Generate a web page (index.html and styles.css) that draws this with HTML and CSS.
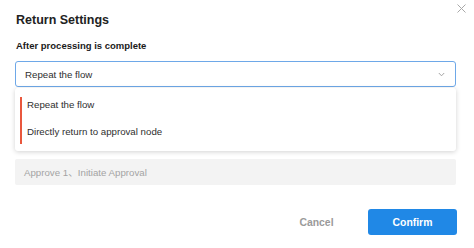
FILE: index.html
```html
<!DOCTYPE html>
<html>
<head>
<meta charset="utf-8">
<link rel="stylesheet" href="styles.css">
</head>
<body>
<div class="dialog">
  <button class="close" aria-label="Close">
    <svg width="9" height="9" viewBox="0 0 9 9"><path d="M0.5 0.5L8.5 8.5M8.5 0.5L0.5 8.5" stroke="#a8a8a8" stroke-width="1" fill="none"/></svg>
  </button>
  <h1 class="title">Return Settings</h1>
  <div class="label">After processing is complete</div>
  <div class="select">
    <span class="select-value">Repeat the flow</span>
    <svg class="chevron" width="7" height="5" viewBox="0 0 7 5"><path d="M0.8 1L3.5 3.8L6.2 1" stroke="#9a9a9a" stroke-width="0.9" fill="none"/></svg>
  </div>
  <div class="menu">
    <div class="options">
      <div class="option">Repeat the flow</div>
      <div class="option">Directly return to approval node</div>
    </div>
  </div>
  <div class="disabled-field">Approve 1、Initiate Approval</div>
  <div class="footer">
    <button class="btn btn-cancel">Cancel</button>
    <button class="btn btn-confirm">Confirm</button>
  </div>
</div>
</body>
</html>
```

FILE: styles.css
```css
html, body {
  margin: 0;
  padding: 0;
  background: #ffffff;
}
body {
  font-family: "Liberation Sans", Arial, "Noto Sans CJK SC", sans-serif;
  width: 474px;
  height: 248px;
  overflow: hidden;
}
.dialog {
  position: relative;
  padding: 13px 18px 0 15px;
  display: flex;
  flex-direction: column;
}
.close {
  position: absolute;
  top: 4px;
  right: 8px;
  width: 9px;
  height: 9px;
  padding: 0;
  border: 0;
  background: none;
  display: flex;
}
.title {
  margin: 0;
  font-size: 12.5px;
  line-height: 15px;
  font-weight: bold;
  color: #222222;
  padding-left: 1px;
}
.label {
  margin-top: 12px;
  font-size: 9.5px;
  line-height: 12px;
  font-weight: bold;
  color: #1a1a1a;
  padding-left: 1px;
}
.select {
  margin-top: 9px;
  height: 26px;
  box-sizing: border-box;
  border: 1px solid #6ea8e8;
  border-radius: 3px;
  display: flex;
  align-items: center;
  justify-content: space-between;
  padding: 0 10px 0 9px;
  font-size: 9.7px;
  color: #2e2e2e;
}
.chevron {
  display: block;
}
.menu {
  margin-top: 1px;
  height: 63px;
  box-sizing: border-box;
  padding-top: 3px;
  background: #ffffff;
  border-radius: 3px;
  box-shadow: 0 1px 5px rgba(0, 0, 0, 0.18);
}
.options {
  position: relative;
}
.options::before {
  content: "";
  position: absolute;
  left: 5px;
  top: 6px;
  bottom: 1px;
  width: 1.6px;
  background: #e9573d;
}
.option {
  height: 27px;
  display: flex;
  align-items: center;
  padding-left: 12px;
  font-size: 9.7px;
  color: #2e2e2e;
}
.disabled-field {
  margin-top: 8px;
  height: 26px;
  display: flex;
  align-items: center;
  padding-left: 9px;
  background: #f3f3f3;
  border-radius: 2px;
  font-size: 9.7px;
  color: #a3a3a3;
}
.footer {
  margin-top: 24px;
  display: flex;
  justify-content: flex-end;
  gap: 7px;
}
.btn {
  width: 89px;
  height: 26px;
  border: 0;
  border-radius: 3px;
  font-family: "Liberation Sans", Arial, sans-serif;
  font-size: 10.4px;
  font-weight: bold;
  padding: 0;
}
.btn-cancel {
  background: transparent;
  color: #9a9a9a;
}
.btn-confirm {
  background: #2088e6;
  color: #ffffff;
  margin-right: -1px;
}
```
